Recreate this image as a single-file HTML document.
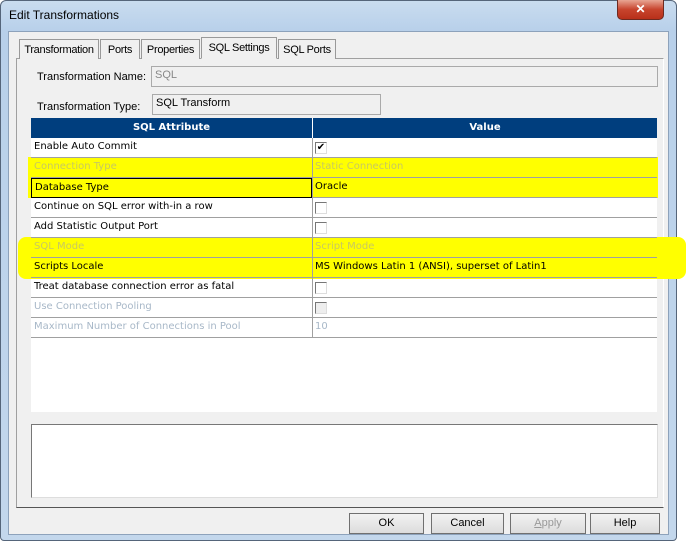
<!DOCTYPE html>
<html><head><style>
*{margin:0;padding:0;box-sizing:border-box}
body{width:689px;height:544px;background:#fff;font-family:"Liberation Sans",sans-serif;font-size:11px;position:relative;overflow:hidden;color:#000}
.a{position:absolute;white-space:nowrap}
.frame{left:0;top:0;width:677px;height:541px;background:linear-gradient(#c9dcef,#b8d0ea 30px,#c3d7ec);border:1px solid #55657a;border-radius:6px 6px 4px 4px}
.title{left:9px;top:8px;font-size:12px;color:#000}
.close{left:617px;top:0;width:47px;height:20px;background:linear-gradient(#e8a593,#c7442d 50%,#b8301a);border:1px solid #6d2a20;border-top:none;border-radius:0 0 5px 5px;color:#fff;font-weight:bold;text-align:center;font-size:12px;line-height:18px}
.client{left:8px;top:31px;width:661px;height:504px;background:#f0f0f0;border:1px solid #8da2bb}
.tab{top:39px;height:20px;border:1px solid #999;border-bottom:none;background:#f0f0f0;padding-top:4px;text-align:center;font-size:11px;letter-spacing:-0.3px}
.panel{left:16px;top:58px;width:648px;height:450px;border:1px solid #a0a0a0;border-right-color:#fff;border-bottom:1px solid #555;background:#f0f0f0}
.field{background:#f0f0f0;border:1px solid #aaa;padding:2px 3px;height:21px}
.grid{left:31px;top:118px;width:626px;height:294px;background:#fff}
.hd{top:118px;height:20px;background:#003e7e;color:#fff;font-weight:bold;text-align:center;line-height:20px;font-family:"DejaVu Sans",sans-serif;font-size:10px}
.row{left:31px;width:626px;height:20px;border-bottom:1px solid #a0a0a0;font-family:"DejaVu Sans",sans-serif;font-size:10px;line-height:18px}
.row span{position:absolute;left:3px}
.row i{position:absolute;left:284px;font-style:normal}
.row:after{content:"";position:absolute;left:281px;top:0;height:20px;border-left:1px solid #a0a0a0}
.g{color:#a8b8c8}
.cb{position:absolute;left:284px;top:4px;width:12px;height:12px;border:1px solid #777;border-right-color:#ddd;border-bottom-color:#ddd;background:#fff}
.y{background:#ffff00}
.btn{top:513px;height:21px;border:1px solid #707070;background:linear-gradient(#f2f2f2,#dcdcdc);text-align:center;line-height:19px;font-size:11px}
</style></head><body>
<div class="a frame"></div>
<div class="a title">Edit Transformations</div>
<div class="a close">✕</div>
<div class="a client"></div>
<div class="a panel"></div>
<div class="a tab" style="left:19px;width:80px">Transformation</div>
<div class="a tab" style="left:100px;width:40px">Ports</div>
<div class="a tab" style="left:141px;width:59px">Properties</div>
<div class="a tab" style="left:201px;top:37px;height:22px;width:76px;border-bottom:1px solid #f0f0f0">SQL Settings</div>
<div class="a tab" style="left:278px;width:58px">SQL Ports</div>
<div class="a" style="left:37px;top:71px">Transformation Name:</div>
<div class="a field" style="left:151px;top:66px;width:507px;color:#888">SQL</div>
<div class="a" style="left:37px;top:101px">Transformation Type:</div>
<div class="a field" style="left:152px;top:94px;width:229px">SQL Transform</div>
<div class="a grid"></div>
<div class="a hd" style="left:31px;width:281px">SQL Attribute</div>
<div class="a hd" style="left:313px;width:344px">Value</div>
<div class="a y" style="left:28px;top:157px;width:630px;height:41px"></div>
<div class="a y" style="left:18px;top:237px;width:668px;height:42px;border-radius:8px"></div>
<div class="a row" style="top:138px"><span>Enable Auto Commit</span><div class="cb" style="font-size:10px;line-height:10px;text-align:center">✔</div></div>
<div class="a row" style="top:158px"><span style="color:#c8c860">Connection Type</span><i style="color:#c8c860">Static Connection</i></div>
<div class="a row" style="top:178px"><span style="left:0;width:281px;height:20px;border:1px solid #000;padding-left:3px">Database Type</span><i>Oracle</i></div>
<div class="a row" style="top:198px"><span>Continue on SQL error with-in a row</span><div class="cb"></div></div>
<div class="a row" style="top:218px"><span>Add Statistic Output Port</span><div class="cb"></div></div>
<div class="a row" style="top:238px"><span style="color:#c8c860">SQL Mode</span><i style="color:#c8c860">Script Mode</i></div>
<div class="a row" style="top:258px"><span>Scripts Locale</span><i>MS Windows Latin 1 (ANSI), superset of Latin1</i></div>
<div class="a row" style="top:278px"><span>Treat database connection error as fatal</span><div class="cb"></div></div>
<div class="a row" style="top:298px"><span class="g">Use Connection Pooling</span><div class="cb" style="background:#eee"></div></div>
<div class="a row" style="top:318px"><span class="g">Maximum Number of Connections in Pool</span><i class="g">10</i></div>
<div class="a" style="left:31px;top:424px;width:627px;height:74px;background:#fff;border:1px solid #777;border-right-color:#ddd;border-bottom-color:#ddd"></div>
<div class="a btn" style="left:349px;width:75px">OK</div>
<div class="a btn" style="left:431px;width:73px">Cancel</div>
<div class="a btn" style="left:510px;width:76px;color:#999"><u>A</u>pply</div>
<div class="a btn" style="left:590px;width:70px">Help</div>
</body></html>
